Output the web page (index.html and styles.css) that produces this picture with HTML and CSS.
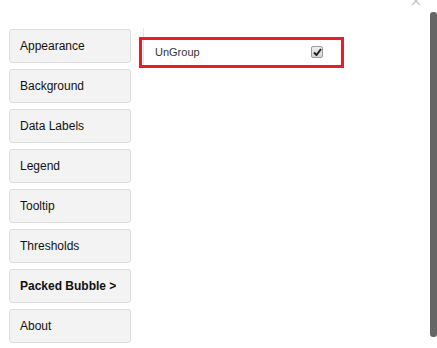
FILE: index.html
```html
<!DOCTYPE html>
<html lang="en">

<head>
  <meta charset="UTF-8">
  <meta name="viewport" content="width=device-width, initial-scale=1.0">
  <title>Chart Settings</title>
  <link rel="stylesheet" href="styles.css">
</head>

<body>
  <div class="main">
    <svg class="close" width="10" height="10" viewBox="0 0 10 10"><path d="M1 1 L9 9 M9 1 L1 9" stroke="#c8c8c8" stroke-width="1.6"/></svg>
    <div class="menu">
      <button class="menu-btn">Appearance</button>
      <button class="menu-btn">Background</button>
      <button class="menu-btn">Data Labels</button>
      <button class="menu-btn">Legend</button>
      <button class="menu-btn">Tooltip</button>
      <button class="menu-btn">Thresholds</button>
      <button class="menu-btn active">Packed Bubble &gt;</button>
      <button class="menu-btn">About</button>
    </div>
    <div class="panel">
      <div class="option">
        <label class="opt-label">UnGroup</label>
        <span class="check">
          <svg width="9" height="8" viewBox="0 0 9 8"><path d="M1 4.5 L3.5 7 L8 1" fill="none" stroke="#222" stroke-width="2"/></svg>
        </span>
      </div>
    </div>
    <div class="scroll-track"><div class="scroll-thumb"></div></div>
  </div>
</body>

</html>
```

FILE: styles.css
```css
* {
  margin: 0;
  padding: 0;
  box-sizing: border-box;
  font-family: 'Liberation Sans', Arial, sans-serif;
}

body {
  width: 437px;
  height: 348px;
  background: #fff;
  overflow: hidden;
}

.main {
  position: relative;
  display: flex;
  height: 100%;
}

.close {
  position: absolute;
  left: 411px;
  top: -4px;
}

.menu {
  display: flex;
  flex-direction: column;
  gap: 6px;
  width: 122px;
  margin: 29px 0 0 9px;
}

.menu-btn {
  height: 34px;
  text-align: left;
  padding-left: 10px;
  font-size: 12px;
  color: #111;
  background: #f3f3f3;
  border: 1px solid #ddd;
  border-radius: 3px;
}

.menu-btn.active {
  font-weight: bold;
}

.panel {
  align-self: flex-start;
  margin: 28px 0 0 12px;
  padding-top: 9px;
  border-left: 1px solid #e6e6e6;
}

.option {
  display: flex;
  align-items: center;
  justify-content: space-between;
  width: 205px;
  height: 31px;
  margin-left: -5px;
  padding: 0 18px 2px 13px;
  border: 3px solid #ec1c24;
}

.opt-label {
  font-size: 11px;
  color: #333;
}

.check {
  display: flex;
  align-items: center;
  justify-content: center;
  width: 12px;
  height: 12px;
  border: 1px solid #999;
  border-radius: 2px;
  background: linear-gradient(#eee, #d4d4d4);
}

.scroll-track {
  margin: 12px 0 0 auto;
  width: 7px;
}

.scroll-thumb {
  height: 325px;
  background: #666;
  border-radius: 3px;
}
```
